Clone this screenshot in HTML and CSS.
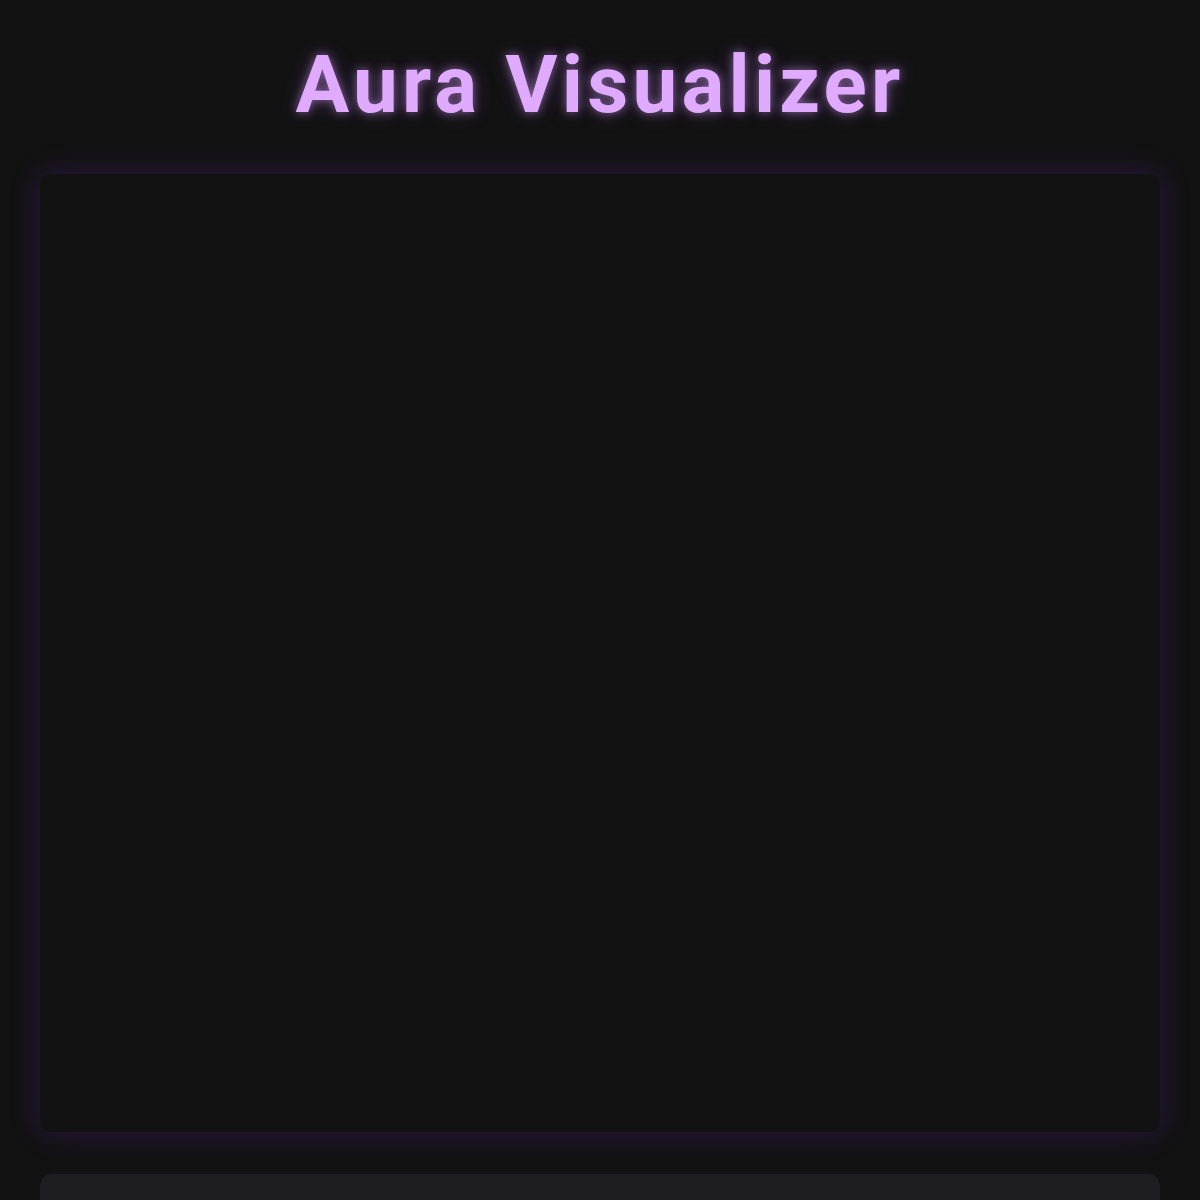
FILE: index.html
```html
<!DOCTYPE html>
<html lang="en">
<head>
    <meta charset="UTF-8">
    <title>Aura Visualizer</title>
    <meta name="viewport" content="width=device-width, initial-scale=1.0">
    <link rel="stylesheet" href="styles.css">
</head>
<body>
    <h1 class="title">Aura Visualizer</h1>
    <div class="stage">
        <canvas id="aura-canvas" class="aura-canvas"></canvas>
    </div>
    <div class="controls">
    </div>
</body>
</html>
```

FILE: styles.css
```css
body {
    font-family: Roboto, 'Liberation Sans', sans-serif;
    background: #121212;
    color: #ddd;
    margin: 0;
    padding: 0 40px;
}
.title {
    margin: 45px 0 49px;
    font-size: 5rem;
    font-weight: 700;
    line-height: 1;
    letter-spacing: 4.2px;
    text-align: center;
    color: #e0aaff;
    text-shadow: 0 0 10px rgba(224, 170, 255, 0.5), 0 0 20px rgba(160, 90, 220, 0.3);
}
.stage {
    border-radius: 12px;
    box-shadow: 0 0 30px rgba(110, 40, 200, 0.28);
}
.aura-canvas {
    display: block;
    width: 100%;
    height: 958px;
    background: #121212;
    border-radius: 12px;
}
.controls {
    margin-top: 42px;
    height: 200px;
    background: #1d1d22;
    border-radius: 12px;
}
```
